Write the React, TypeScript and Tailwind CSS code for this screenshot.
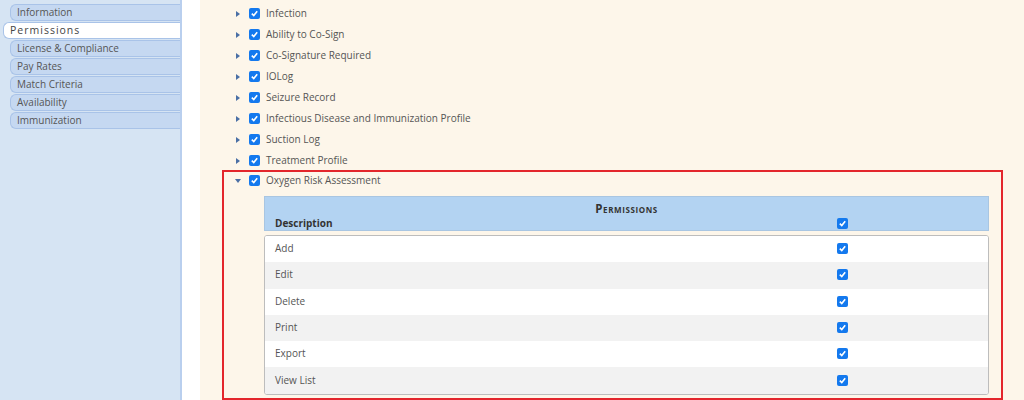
export default function App() {
  const tabs = [
    "Information",
    "Permissions",
    "License & Compliance",
    "Pay Rates",
    "Match Criteria",
    "Availability",
    "Immunization",
  ];
  const items = [
    "Infection",
    "Ability to Co-Sign",
    "Co-Signature Required",
    "IOLog",
    "Seizure Record",
    "Infectious Disease and Immunization Profile",
    "Suction Log",
    "Treatment Profile",
  ];
  const perms = ["Add", "Edit", "Delete", "Print", "Export", "View List"];

  const Check = () => (
    <span className="flex h-[11px] w-[11px] items-center justify-center rounded-[2px] bg-[#1479ee]">
      <svg width="9" height="9" viewBox="0 0 10 10">
        <path d="M2 5.2 L4.2 7.3 L8 2.6" fill="none" stroke="white" strokeWidth="1.8" />
      </svg>
    </span>
  );

  return (
    <div
      className="flex h-[400px] w-[1024px] overflow-hidden bg-white text-[10px] text-[#555]"
      style={{ fontFamily: '"Open Sans", "Noto Sans", sans-serif' }}
    >
      {/* sidebar */}
      <div className="flex w-[182px] shrink-0 flex-col border-r-2 border-[#b9cfee] bg-[#d6e4f3] pt-[4px]">
        {tabs.map((t) =>
          t === "Permissions" ? (
            <div
              key={t}
              className="ml-[3px] mb-[1px] flex h-[17px] items-center rounded-l-[6px] border border-r-0 border-[#a9c3e8] bg-white pl-[6px] text-[10.5px] tracking-[1px] text-[#444]"
            >
              {t}
            </div>
          ) : (
            <div
              key={t}
              className="ml-[10px] mb-[1px] flex h-[17px] items-center rounded-l-[6px] border border-r-0 border-[#a9c3e8] bg-[#c5d8f1] pl-[6px] text-[#555]"
            >
              {t}
            </div>
          )
        )}
      </div>

      {/* gap */}
      <div className="w-[18px] shrink-0 bg-white" />

      {/* main */}
      <div className="flex flex-1 flex-col bg-[#fdf6ea] pt-[3px]">
        <div className="ml-[36px] flex flex-col">
          {items.map((t) => (
            <div key={t} className="flex h-[21px] items-center">
              <span className="mr-[9px] h-0 w-0 border-y-[3.5px] border-l-[4px] border-y-transparent border-l-[#4a6fa5]" />
              <Check />
              <span className="ml-[6px]">{t}</span>
            </div>
          ))}
        </div>

        <div className="ml-[22px] mr-[21px] -mt-[1px] flex flex-col border-2 border-[#e3262c] pb-[3px]">
          <div className="ml-[11px] flex h-[17px] items-center">
            <span className="mr-[8px] h-0 w-0 border-x-[3.5px] border-t-[4px] border-x-transparent border-t-[#4a6fa5]" />
            <Check />
            <span className="ml-[6px]">Oxygen Risk Assessment</span>
          </div>

          <div className="ml-[40px] mr-[12px] mt-[7px]">
            <div className="flex h-[35px] flex-col border border-[#a9c6e2] bg-[#b3d3f2] text-[#333]">
              <div className="pt-[3px] text-center text-[11.5px] font-bold tracking-[0.6px] [font-variant:small-caps]">
                Permissions
              </div>
              <div className="-mt-[1px] flex items-center pl-[10px]">
                <span className="flex-1 font-bold">Description</span>
                <span className="mr-[140px]">
                  <Check />
                </span>
              </div>
            </div>
            <div className="mt-[4px] overflow-hidden rounded-[3px] border border-[#bdbdbd] bg-white">
              {perms.map((p, i) => (
                <div
                  key={p}
                  className={`flex h-[26.3px] items-center pl-[10px] pb-[1px] ${i % 2 === 1 ? "bg-[#f2f2f2]" : "bg-white"}`}
                >
                  <span className="flex-1">{p}</span>
                  <span className="mr-[140px]">
                    <Check />
                  </span>
                </div>
              ))}
            </div>
          </div>
        </div>
      </div>
    </div>
  );
}
